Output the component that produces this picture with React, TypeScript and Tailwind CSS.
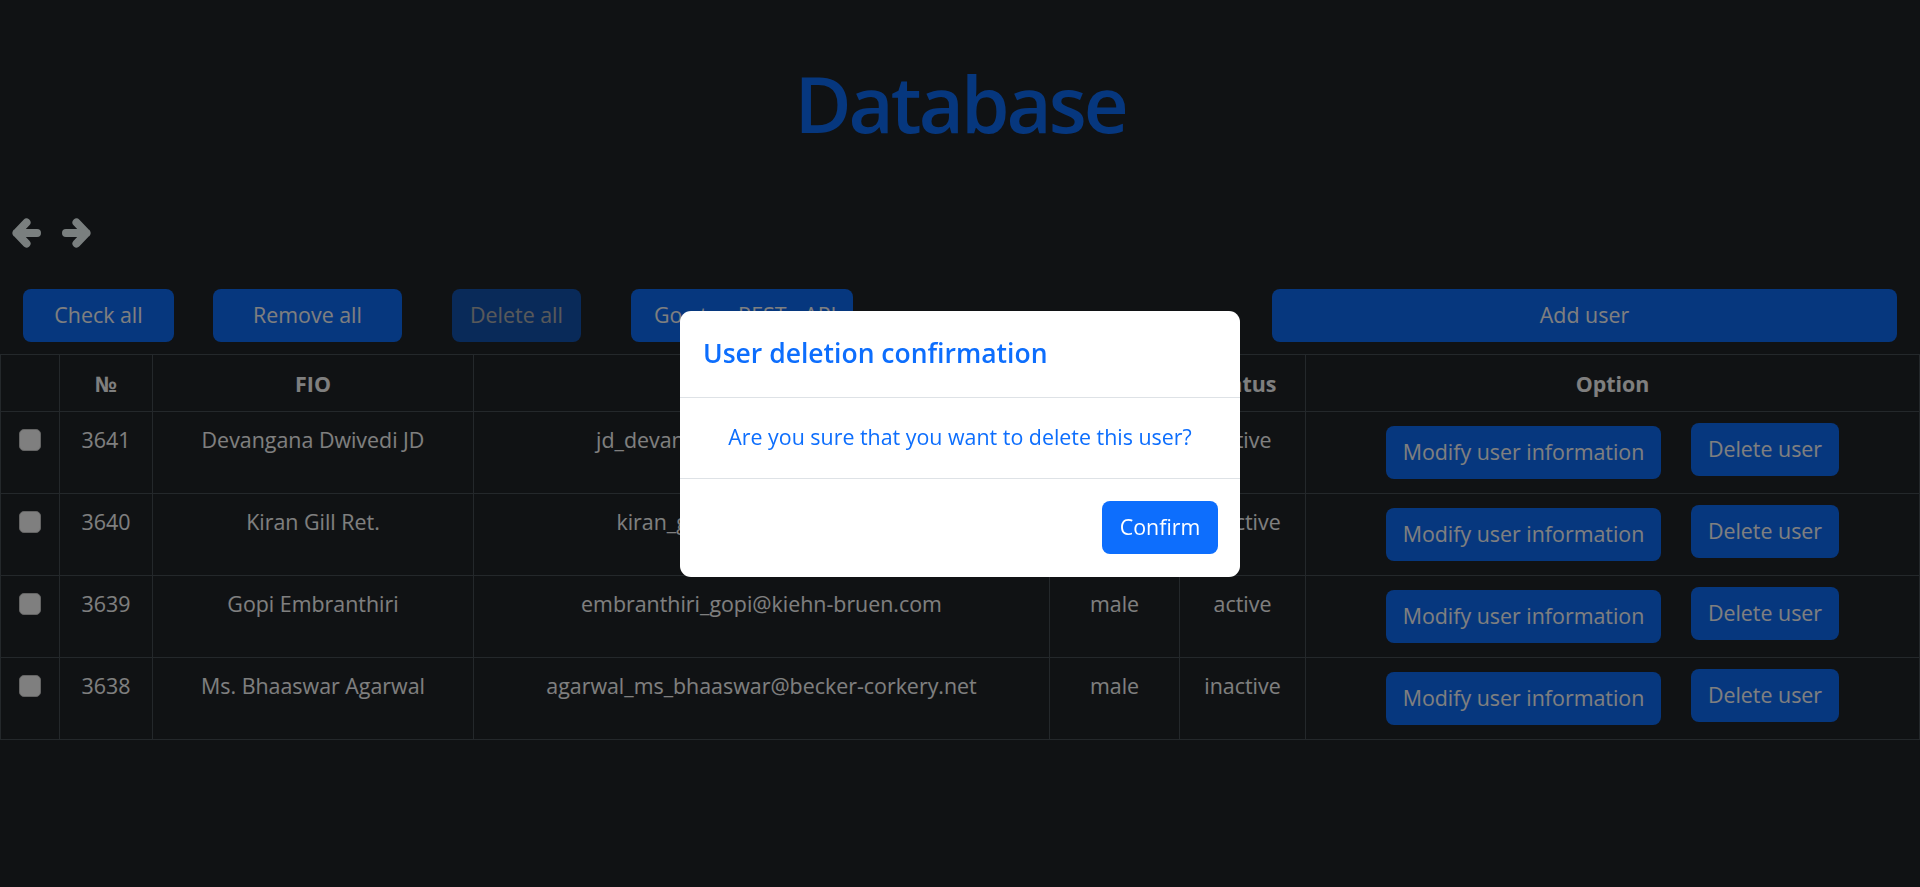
import React from "react";

const rows = [
  { id: 3641, fio: "Devangana Dwivedi JD", email: "jd_devangana_dwivedi@ortiz.info", gender: "female", status: "active" },
  { id: 3640, fio: "Kiran Gill Ret.", email: "kiran_gill_ret@lehner-kris.org", gender: "male", status: "inactive" },
  { id: 3639, fio: "Gopi Embranthiri", email: "embranthiri_gopi@kiehn-bruen.com", gender: "male", status: "active" },
  { id: 3638, fio: "Ms. Bhaaswar Agarwal", email: "agarwal_ms_bhaaswar@becker-corkery.net", gender: "male", status: "inactive" },
];

function ArrowLeft() {
  return (
    <svg width="29" height="30" viewBox="0 0 29 30" fill="none">
      <path d="M25 15H4.5M14.5 4.5L4.5 15L14.5 25.5" stroke="#f5ffff" strokeWidth="8" strokeLinecap="round" strokeLinejoin="round" />
    </svg>
  );
}

function ArrowRight() {
  return (
    <svg width="29" height="30" viewBox="0 0 29 30" fill="none">
      <path d="M4 15H24.5M14.5 4.5L24.5 15L14.5 25.5" stroke="#f5ffff" strokeWidth="8" strokeLinecap="round" strokeLinejoin="round" />
    </svg>
  );
}

const btn = "flex h-[53px] items-center justify-center rounded-[8px] bg-[#0d6efd] text-white";

export default function App() {
  return (
    <div className="min-h-screen bg-[#212529] font-['Open_Sans',sans-serif] text-[21.4px] text-white">
      <h1 className="pt-[55px] text-center text-[78px] font-semibold leading-[96px] tracking-[-3px] text-[#0d6efd]">Database</h1>

      <div className="mt-[67px] flex gap-[21px] pl-[12px]">
        <ArrowLeft />
        <ArrowRight />
      </div>

      <div className="mt-[41px] flex px-[23px]">
        <button className={`${btn} w-[151px]`}>Check all</button>
        <button className={`${btn} ml-[39px] w-[189px]`}>Remove all</button>
        <button className={`${btn} ml-[50px] w-[129px] opacity-65`}>Delete all</button>
        <button className="ml-[50px] flex h-[53px] w-[222px] items-center justify-start rounded-[8px] bg-[#0d6efd] pl-[23px] text-white [word-spacing:12px]">Go to REST API</button>
        <button className={`${btn} ml-auto w-[625px]`}>Add user</button>
      </div>

      <table className="mt-[12px] w-full table-fixed border-collapse">
        <colgroup>
          <col className="w-[59px]" />
          <col className="w-[93px]" />
          <col className="w-[321px]" />
          <col className="w-[576px]" />
          <col className="w-[130px]" />
          <col className="w-[126px]" />
          <col />
        </colgroup>
        <thead>
          <tr className="h-[57px]">
            {["", "№", "FIO", "Email", "Gender", "Status", "Option"].map((h, i) => (
              <th key={i} className="border border-[#495057] text-center align-middle font-bold leading-[33px]">
                {h}
              </th>
            ))}
          </tr>
        </thead>
        <tbody>
          {rows.map((r) => (
            <tr key={r.id} className="h-[82px]">
              <td className="border border-[#495057] pt-[11px] align-top">
                <input type="checkbox" readOnly className="mx-auto mt-[6px] block h-[22px] w-[22px] appearance-none rounded-[5px] border border-[#c8c8c8] bg-white" />
              </td>
              <td className="border border-[#495057] pt-[11px] text-center align-top leading-[33px]">{r.id}</td>
              <td className="border border-[#495057] pt-[11px] text-center align-top leading-[33px]">{r.fio}</td>
              <td className="border border-[#495057] pt-[11px] text-center align-top leading-[33px]">{r.email}</td>
              <td className="border border-[#495057] pt-[11px] text-center align-top leading-[33px]">{r.gender}</td>
              <td className="border border-[#495057] pt-[11px] text-center align-top leading-[33px]">{r.status}</td>
              <td className="border border-[#495057] pt-[11px] align-top">
                <div className="flex items-start justify-center gap-[30px]">
                  <button className={`${btn} mt-[3px] w-[275px]`}>Modify user information</button>
                  <button className={`${btn} w-[148px]`}>Delete user</button>
                </div>
              </td>
            </tr>
          ))}
        </tbody>
      </table>

      <div className="fixed inset-0 z-40 bg-black/50" />
      <div className="fixed inset-0 z-50 flex items-center justify-center">
        <div className="w-[560px] overflow-hidden rounded-[11px] bg-white">
          <div className="flex h-[87px] items-center border-b border-[#dee2e6] px-[23px]">
            <h5 className="text-[26.5px] font-semibold text-[#0d6efd]">User deletion confirmation</h5>
          </div>
          <div className="flex h-[80px] items-center justify-center text-[#0d6efd]">Are you sure that you want to delete this user?</div>
          <div className="flex h-[99px] items-center justify-end border-t border-[#dee2e6] px-[22px]">
            <button className="h-[53px] w-[116px] rounded-[8px] bg-[#0d6efd] text-white">Confirm</button>
          </div>
        </div>
      </div>
    </div>
  );
}
